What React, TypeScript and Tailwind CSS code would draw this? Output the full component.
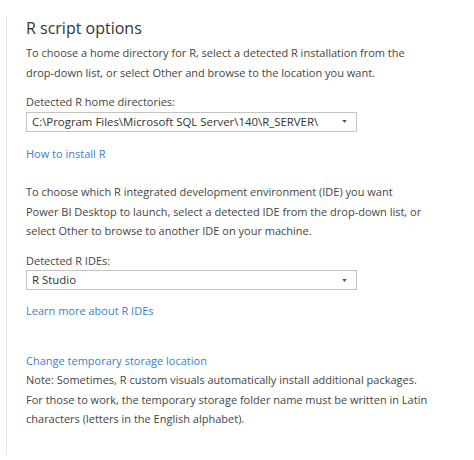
import React from 'react';

const font = { fontFamily: '"Open Sans", "Liberation Sans", sans-serif' };

const Select = ({ value }: { value: string }) => (
  <div className="flex h-[20px] w-[331px] items-center justify-between border border-[#c3c3c3] bg-white pl-[5px] pr-[9px] text-[11.4px] text-[#333]">
    <span>{value}</span>
    <svg width="5" height="3" viewBox="0 0 6 4">
      <path d="M0 0h6L3 4z" fill="#555" />
    </svg>
  </div>
);

export default function App() {
  return (
    <div className="h-[460px] w-[474px] bg-white pt-[12px] pl-[6px]" style={font}>
      <div className="h-[438px] border-l border-[#e6e6e6] pl-[19px] text-[11px] leading-[19.5px] text-[#444]">
        <h1 className="mt-[4px] text-[16px] leading-[24px] text-[#333]">R script options</h1>
        <p className="mt-[3px]">
          To choose a home directory for R, select a detected R installation from the
          <br />
          drop-down list, or select Other and browse to the location you want.
        </p>
        <div className="mt-[10px]">Detected R home directories:</div>
        <Select value="C:\Program Files\Microsoft SQL Server\140\R_SERVER\" />
        <a className="mt-[12px] block text-[#3a7fc8]">How to install R</a>

        <p className="mt-[19px]">
          To choose which R integrated development environment (IDE) you want
          <br />
          Power BI Desktop to launch, select a detected IDE from the drop-down list, or
          <br />
          select Other to browse to another IDE on your machine.
        </p>
        <div className="mt-[10px]">Detected R IDEs:</div>
        <Select value="R Studio" />
        <a className="mt-[11px] block text-[#3a7fc8]">Learn more about R IDEs</a>

        <a className="mt-[30px] block text-[#3a7fc8]">Change temporary storage location</a>
        <p>
          Note: Sometimes, R custom visuals automatically install additional packages.
          <br />
          For those to work, the temporary storage folder name must be written in Latin
          <br />
          characters (letters in the English alphabet).
        </p>
      </div>
    </div>
  );
}
